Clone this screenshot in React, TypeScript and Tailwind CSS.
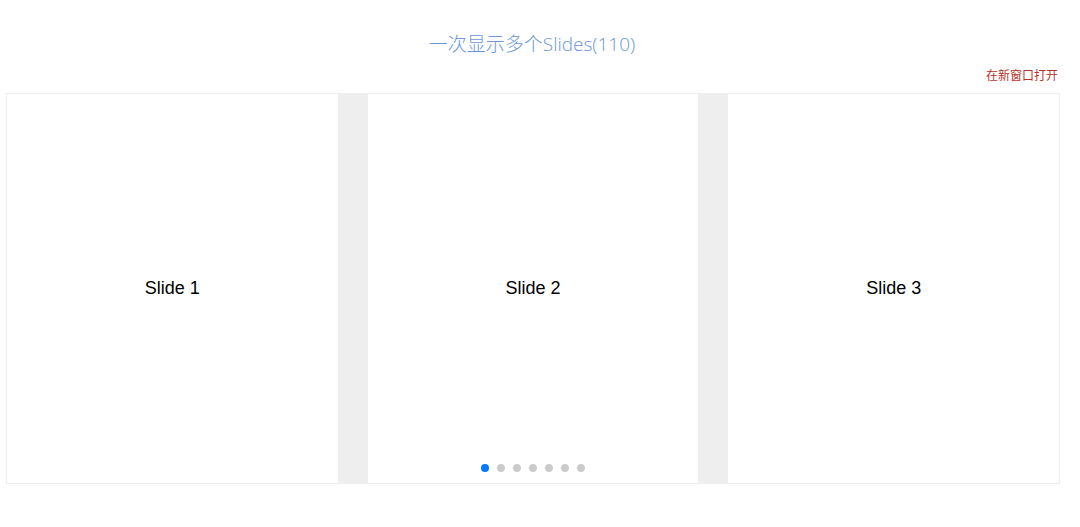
export default function App() {
  const slides = ['Slide 1', 'Slide 2', 'Slide 3'];
  const dots = [0, 1, 2, 3, 4, 5, 6];

  return (
    <div className="min-h-screen bg-white pt-[30px]" style={{ fontFamily: '"Liberation Sans", "Noto Sans CJK SC", sans-serif' }}>
      <h1
        className="text-center text-[19px] leading-[28px] font-light text-[#6b97d9] pr-[16px]"
        style={{ fontFamily: '"Open Sans", "Noto Sans CJK SC", sans-serif' }}
      >
        一次显示多个Slides(110)
      </h1>

      <div className="w-[1054px] ml-[6px]">
        <div className="flex justify-end pt-[8px] pb-[9px] pr-[2px]">
          <a className="text-[12px] leading-[18px] text-[#b8322a]" style={{ fontFamily: '"Noto Sans CJK SC", sans-serif' }}>
            在新窗口打开
          </a>
        </div>

        <div className="relative h-[391px] border border-[#eeeeee] bg-[#eeeeee] flex gap-[30px]">
          {slides.map((s) => (
            <div key={s} className="flex-1 bg-white flex items-center justify-center text-[18px] text-black">
              {s}
            </div>
          ))}

          <div className="absolute left-0 right-0 bottom-[11px] flex justify-center">
            {dots.map((d) => (
              <span
                key={d}
                className={`mx-[4px] w-[8px] h-[8px] rounded-full ${d === 0 ? 'bg-[#007aff]' : 'bg-[#cccccc]'}`}
              />
            ))}
          </div>
        </div>
      </div>
    </div>
  );
}
